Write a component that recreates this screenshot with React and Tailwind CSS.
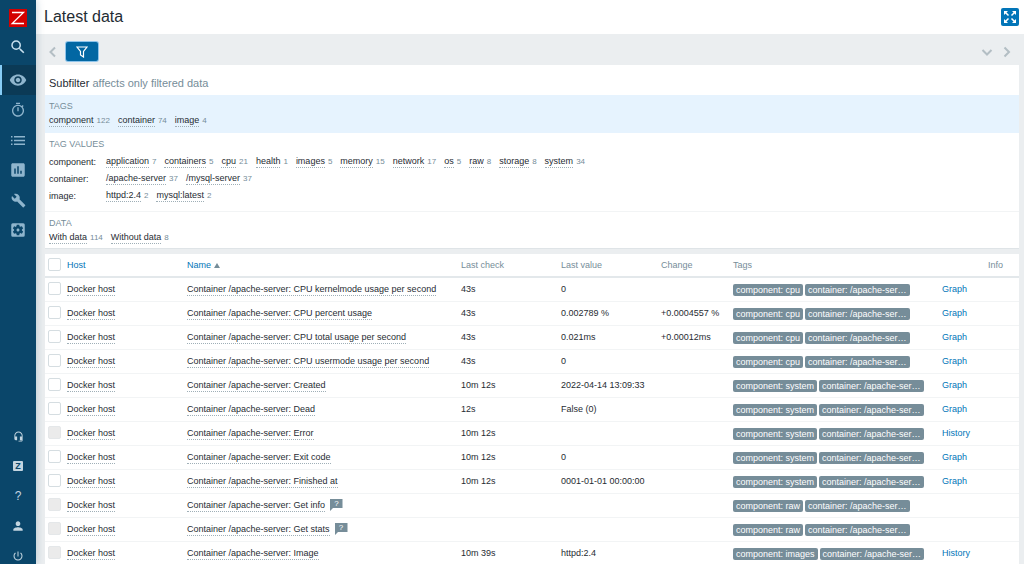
import React, { useState } from 'react';
import {
  MdSearch,
  MdVisibility,
  MdOutlineTimer,
  MdInsertChart,
  MdBuild,
  MdSettingsApplications,
  MdHeadsetMic,
  MdPerson,
  MdPowerSettingsNew,
} from 'react-icons/md';

const ListIcon = () => (
  <svg width="14" height="9" viewBox="0 0 14 9" fill="currentColor">
    <path d="M0 0h1.500v1.500H0zM3 0h11v1.500H3zM0 3.700h1.500v1.500H0zM3 3.700h11v1.500H3zM0 7.400h1.500v1.500H0zM3 7.400h11v1.500H3z" />
  </svg>
);

const mainMenu = [
  { label: 'Monitoring', icon: <MdVisibility size={18} />, active: true },
  { label: 'Services', icon: <MdOutlineTimer size={16} stroke="currentColor" /> },
  { label: 'Inventory', icon: <ListIcon /> },
  { label: 'Reports', icon: <MdInsertChart size={18} /> },
  { label: 'Configuration', icon: <MdBuild size={15} /> },
  { label: 'Administration', icon: <MdSettingsApplications size={18} /> },
];

const userMenu = [
  { label: 'Support', icon: <MdHeadsetMic size={11} /> },
  {
    label: 'Share',
    icon: (
      <span className="flex h-[10px] w-[10px] items-center justify-center rounded-[1px] bg-[#c3d5e0] text-[9px] leading-none font-bold text-[#0a466a]">
        Z
      </span>
    ),
  },
  { label: 'Help', icon: <span className="text-xs">?</span> },
  { label: 'User profile', icon: <MdPerson size={14} /> },
  { label: 'Sign out', icon: <MdPowerSettingsNew size={12} /> },
];

const tags = [['component', 122], ['container', 74], ['image', 4]];

const tagValues = [
  {
    name: 'component:',
    values: [
      ['application', 7], ['containers', 5], ['cpu', 21], ['health', 1], ['images', 5], ['memory', 15],
      ['network', 17], ['os', 5], ['raw', 8], ['storage', 8], ['system', 34],
    ],
  },
  { name: 'container:', values: [['/apache-server', 37], ['/mysql-server', 37]] },
  { name: 'image:', values: [['httpd:2.4', 2], ['mysql:latest', 2]] },
];

const dataFilters = [['With data', 114], ['Without data', 8]];

const items = [
  { name: 'CPU kernelmode usage per second', check: '43s', value: '0', tag: 'cpu', link: 'Graph' },
  { name: 'CPU percent usage', check: '43s', value: '0.002789 %', change: '+0.0004557 %', tag: 'cpu', link: 'Graph' },
  { name: 'CPU total usage per second', check: '43s', value: '0.021ms', change: '+0.00012ms', tag: 'cpu', link: 'Graph' },
  { name: 'CPU usermode usage per second', check: '43s', value: '0', tag: 'cpu', link: 'Graph' },
  { name: 'Created', check: '10m 12s', value: '2022-04-14 13:09:33', tag: 'system', link: 'Graph' },
  { name: 'Dead', check: '12s', value: 'False (0)', tag: 'system', link: 'Graph' },
  { name: 'Error', check: '10m 12s', tag: 'system', link: 'History', disabled: true },
  { name: 'Exit code', check: '10m 12s', value: '0', tag: 'system', link: 'Graph' },
  { name: 'Finished at', check: '10m 12s', value: '0001-01-01 00:00:00', tag: 'system', link: 'Graph' },
  { name: 'Get info', tag: 'raw', hint: true, disabled: true },
  { name: 'Get stats', tag: 'raw', hint: true, disabled: true },
  { name: 'Image', check: '10m 39s', value: 'httpd:2.4', tag: 'images', link: 'History', disabled: true },
];

const Sidebar = () => (
  <aside className="z-10 flex h-full w-9 shrink-0 flex-col overflow-hidden bg-[#0a466a] text-[#8fb5cd] shadow-[0_0_8px_rgba(10,70,106,0.25)]">
    <a href="#home" aria-label="Zabbix" className="mt-[9px] ml-[9px] block h-[18px] w-[18px] bg-[#d40000]">
      <svg width="18" height="18" viewBox="0 0 18 18" fill="none" stroke="#fff" strokeWidth="1.300">
        <polyline points="3,3.5 14.5,3.5 3.2,14.5 15,14.5" />
      </svg>
    </a>
    <button aria-label="Search" className="mt-[5px] mb-[3px] flex h-[30px] shrink-0 items-center justify-center text-[#c8e0ef]">
      <MdSearch size={18} stroke="currentColor" />
    </button>
    <nav>
      {mainMenu.map((item) => (
        <a
          key={item.label}
          href="#menu"
          aria-label={item.label}
          className={`flex h-[30px] items-center justify-center border-l-2 pr-0.5 ${
            item.active ? 'border-[#87ccf5] bg-[#0b3a56]' : 'border-transparent'
          }`}
        >
          {item.icon}
        </a>
      ))}
    </nav>
    <nav className="mt-auto -mb-[7px] text-[#c3d5e0]">
      {userMenu.map((item) => (
        <a key={item.label} href="#user" aria-label={item.label} className="flex h-[30px] items-center justify-center">
          {item.icon}
        </a>
      ))}
    </nav>
  </aside>
);

const Dotted = ({ children }) => (
  <a href="#item" className="border-b border-dotted border-[#9fafb7] pb-px">{children}</a>
);

const FilterList = ({ values }) => (
  <ul className="flex flex-wrap gap-x-2">
    {values.map(([label, count]) => (
      <li key={label}>
        <Dotted>{label}</Dotted>
        <span className="ml-[3px] text-[8px] text-[#768d99]">{count}</span>
      </li>
    ))}
  </ul>
);

const Heading = ({ children }) => (
  <h3 className="leading-[14px] text-[#768d99] uppercase">{children}</h3>
);

const Subfilter = () => (
  <section className="mb-[5px] border-b border-[#dfe4e7] bg-white leading-[14px]">
    <h2 className="px-1 pt-[11px] pb-[5px] text-[11px]">
      Subfilter <span className="text-[#768d99]">affects only filtered data</span>
    </h2>
    <div className="bg-[#e6f3fe] px-1 pt-1 pb-[5px]">
      <Heading>Tags</Heading>
      <FilterList values={tags} />
    </div>
    <div className="border-b border-[#f2f4f5] px-1 pt-1 pb-2">
      <Heading>Tag values</Heading>
      <div className="pt-px">
        {tagValues.map((row) => (
          <div key={row.name} className="flex h-[17px] items-end">
            <span className="w-[57px] shrink-0">{row.name}</span>
            <FilterList values={row.values} />
          </div>
        ))}
      </div>
    </div>
    <div className="px-1 pt-1 pb-[3px]">
      <Heading>Data</Heading>
      <FilterList values={dataFilters} />
    </div>
  </section>
);

const Checkbox = ({ label, disabled }) => (
  <input
    type="checkbox"
    aria-label={label}
    disabled={disabled}
    className="mb-px ml-[3px] block h-[13px] w-[13px] appearance-none rounded-xs border border-[#d5dde1] bg-white checked:bg-[#0275b8] disabled:border-[#e4e7e9] disabled:bg-[#ebebeb]"
  />
);

const Tag = ({ children }) => (
  <span className="block h-3 rounded-xs bg-[#768d99] px-[3px] leading-3 text-white">{children}</span>
);

const HintIcon = () => (
  <button aria-label="Description" className="relative ml-[5px] inline-block h-[12px] w-[13px] align-middle text-white">
    <svg className="absolute inset-0" width="13" height="12" viewBox="0 0 13 12" fill="#768d99">
      <path d="M0 0h12.500v9H3L0 12z" />
    </svg>
    <span className="absolute inset-x-0 top-0 text-[8px] leading-[9px]">?</span>
  </button>
);

const ItemsTable = () => (
  <table className="w-full table-fixed border-collapse bg-white text-left whitespace-nowrap">
    <colgroup>
      <col className="w-[22px]" />
      <col className="w-[120px]" />
      <col />
      <col className="w-[100px]" />
      <col className="w-[100px]" />
      <col className="w-[72px]" />
      <col className="w-[209px]" />
      <col className="w-[46px]" />
      <col className="w-[31px]" />
    </colgroup>
    <thead>
      <tr className="h-[23px] border-b-2 border-[#e3e8eb] text-[#768d99] [&>th]:font-normal">
        <th><Checkbox label="Select all" /></th>
        <th><a href="#host" className="text-[#0275b8]">Host</a></th>
        <th>
          <a href="#name" className="flex items-center gap-[3px] text-[#0275b8]">
            Name
            <svg width="6" height="5" viewBox="0 0 6 5" fill="#768d99"><path d="M3 0l3 5H0z" /></svg>
          </a>
        </th>
        <th>Last check</th>
        <th>Last value</th>
        <th>Change</th>
        <th>Tags</th>
        <th></th>
        <th>Info</th>
      </tr>
    </thead>
    <tbody>
      {items.map((item) => (
        <tr key={item.name} className="h-6 border-b border-[#f2f4f5]">
          <td><Checkbox label={`Select ${item.name}`} disabled={item.disabled} /></td>
          <td><Dotted>Docker host</Dotted></td>
          <td>
            <Dotted>Container /apache-server: {item.name}</Dotted>
            {item.hint && <HintIcon />}
          </td>
          <td>{item.check}</td>
          <td>{item.value}</td>
          <td>{item.change}</td>
          <td>
            <div className="flex gap-0.5 pt-0.5">
              <Tag>component: {item.tag}</Tag>
              <Tag>container: /apache-ser…</Tag>
            </div>
          </td>
          <td>{item.link && <a href="#view" className="text-[#0275b8]">{item.link}</a>}</td>
          <td></td>
        </tr>
      ))}
    </tbody>
  </table>
);

const Chevron = ({ d }) => (
  <svg width="12" height="12" viewBox="0 0 12 12" fill="none" stroke="#b3bec4" strokeWidth="2">
    <path d={d} />
  </svg>
);

export default function App() {
  const [open, setOpen] = useState(true);

  return (
    <div className="flex h-screen overflow-hidden bg-[#ebeef0] font-['Liberation_Sans',Arial,sans-serif] text-[9px] leading-3 text-[#1f2c33]">
      <Sidebar />
      <main className="min-w-0 flex-1 overflow-y-auto [scrollbar-width:none]">
        <header className="flex h-[34px] items-center justify-between bg-white pr-[5px] pl-2">
          <h1 className="text-base">Latest data</h1>
          <button aria-label="Kiosk mode" className="flex h-[18px] w-[18px] items-center justify-center rounded-xs bg-[#0275b8]">
            <svg width="12" height="12" viewBox="0 0 12 12" fill="#fff" stroke="#fff" strokeWidth="1.500">
              <path stroke="none" d="M0 0h4L0 4zM12 0v4L8 0zM0 12V8l4 4zM12 12H8l4-4z" />
              <path d="M1 1l3.500 3.500M11 1L7.500 4.500M1 11l3.500-3.500M11 11L7.500 7.500" />
            </svg>
          </button>
        </header>
        <div className="pr-[5px] pl-[9px]">
          <div className="flex h-[31px] items-center gap-2 pt-1 pr-1.5 pl-px">
            <button aria-label="Previous tab"><Chevron d="M9 1.500L4.500 6l4.500 4.500" /></button>
            <button
              aria-label="Filter"
              aria-expanded={open}
              onClick={() => setOpen(!open)}
              className="flex h-[19px] w-8 items-center justify-center rounded-xs bg-[#0267a3] ring-1 ring-[#8fc4ea]"
            >
              <svg width="12" height="12" viewBox="0 0 12 12" fill="none" stroke="#fff" strokeWidth="1.200">
                <path d="M1 1h10L7.500 5.500V11L4.500 9V5.500z" />
              </svg>
            </button>
            <button aria-label="Tab list" className="ml-auto"><Chevron d="M1.500 4L6 8.500 10.500 4" /></button>
            <button aria-label="Next tab"><Chevron d="M3.500 1.500L8 6l-4.500 4.500" /></button>
          </div>
          {open && <Subfilter />}
          <ItemsTable />
        </div>
      </main>
    </div>
  );
}
